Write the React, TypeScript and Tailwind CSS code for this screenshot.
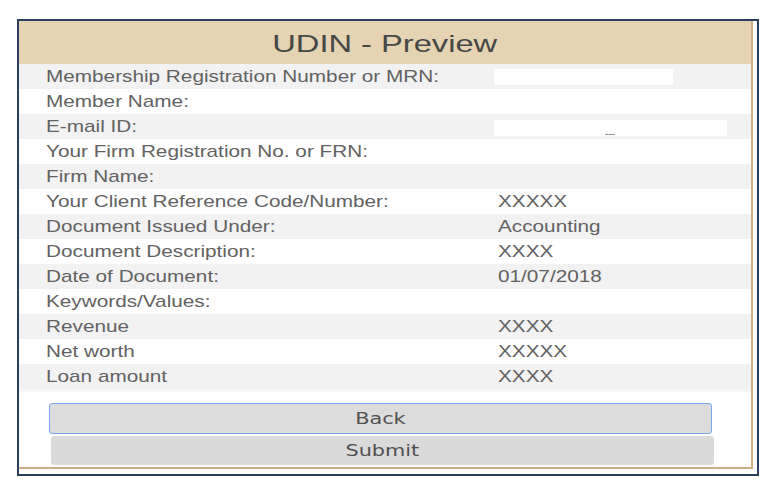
import React from "react";

type Row = {
  label: string;
  value?: string;
  blank?: "mrn" | "email";
};

const rows: Row[] = [
  { label: "Membership Registration Number or MRN:", blank: "mrn" },
  { label: "Member Name:" },
  { label: "E-mail ID:", blank: "email" },
  { label: "Your Firm Registration No. or FRN:" },
  { label: "Firm Name:" },
  { label: "Your Client Reference Code/Number:", value: "XXXXX" },
  { label: "Document Issued Under:", value: "Accounting" },
  { label: "Document Description:", value: "XXXX" },
  { label: "Date of Document:", value: "01/07/2018" },
  { label: "Keywords/Values:" },
  { label: "Revenue", value: "XXXX" },
  { label: "Net worth", value: "XXXXX" },
  { label: "Loan amount", value: "XXXX" },
];

const App = () => {
  return (
    <div className="w-[768px] h-[481px] bg-white overflow-hidden pt-[19px] pl-[17px]">
      <div className="w-[742px] h-[457px] border-2 border-[#2b3f5c] flex">
        <div className="w-[734px] h-[448px] border-r-2 border-b-2 border-[#cdae88] flex flex-col">
          {/* header */}
          <div className="h-[43px] bg-[#e5d3b3] flex items-center justify-center">
            <span className="inline-block scale-x-[1.36] text-[24px] text-[#474747] font-['Liberation_Sans',Arial,sans-serif] pt-[2px]">
              UDIN - Preview
            </span>
          </div>

          {/* rows */}
          <div className="flex flex-col font-['Liberation_Sans',Arial,sans-serif] text-[17px] text-[#626262]">
            {rows.map((row, i) => (
              <div
                key={row.label}
                className={`h-[25px] flex items-center pt-[1px] ${i % 2 === 0 ? "bg-[#f2f2f2]" : "bg-white"}`}
              >
                <div className="w-[479px] pl-[27px]">
                  <span className="inline-block origin-left scale-x-[1.22] whitespace-nowrap">
                    {row.label}
                  </span>
                </div>
                <div className="flex-1 flex items-center">
                  {row.value && (
                    <span className="inline-block origin-left scale-x-[1.22] whitespace-nowrap">
                      {row.value}
                    </span>
                  )}
                  {row.blank === "mrn" && (
                    <span className="block w-[179px] h-[16px] bg-white -ml-[4px]" />
                  )}
                  {row.blank === "email" && (
                    <span className="relative block w-[233px] h-[16px] bg-white -ml-[4px] mt-[2px]">
                      <span className="absolute left-[111px] top-[14px] w-[10px] h-[1px] bg-[#999]" />
                    </span>
                  )}
                </div>
              </div>
            ))}
          </div>

          <div className="h-[3px] bg-[#f7f7f7]" />

          {/* buttons */}
          <div className="flex flex-col pt-[11px] font-['DejaVu_Sans',Verdana,sans-serif] text-[16px] text-[#505050]">
            <button className="ml-[30px] w-[663px] h-[31px] bg-[#dcdcdc] border border-[#7aa7ec] rounded-[3px] flex items-center justify-center">
              <span className="inline-block scale-x-[1.3]">Back</span>
            </button>
            <button className="ml-[32px] mt-[2px] w-[663px] h-[29px] bg-[#dadada] rounded-[3px] flex items-center justify-center">
              <span className="inline-block scale-x-[1.3]">Submit</span>
            </button>
          </div>
        </div>
      </div>
    </div>
  );
};

export default App;
